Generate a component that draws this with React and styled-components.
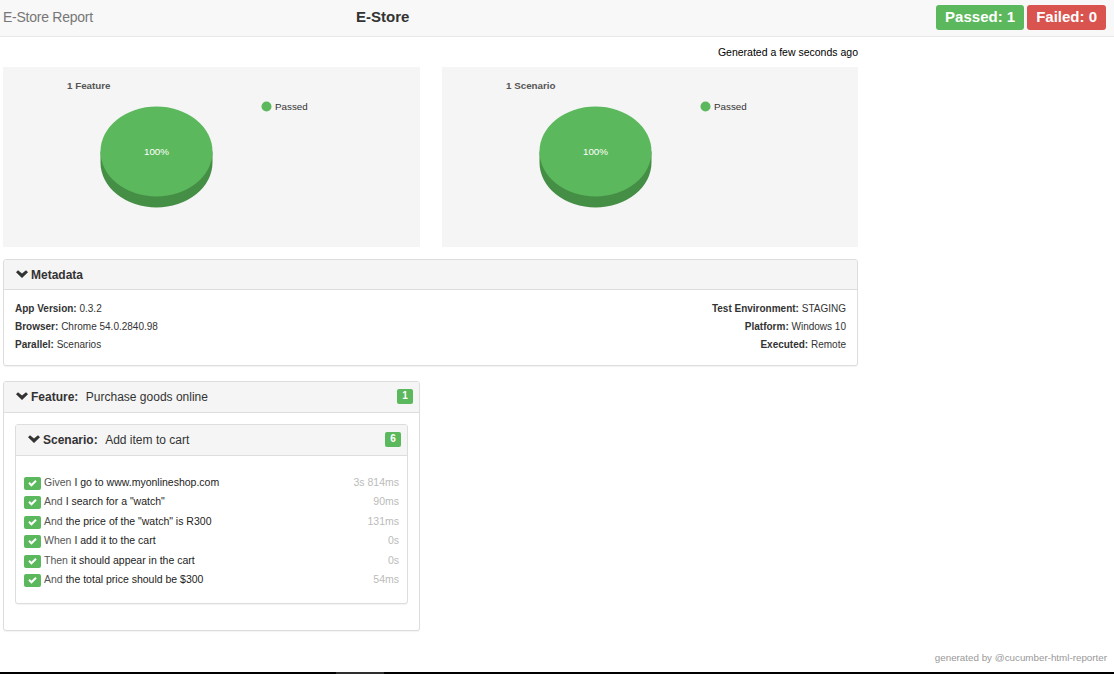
import React from 'react';
import styled, { createGlobalStyle } from 'styled-components';

const Global = createGlobalStyle`
  html, body { margin: 0; padding: 0; background: #fff; }
  body { font-family: "Liberation Sans", Arial, sans-serif; color: #333; }
  * { box-sizing: border-box; }
`;

const Page = styled.div`
  width: 1114px;
  height: 674px;
  display: flex;
  flex-direction: column;
  overflow: hidden;
`;
const Navbar = styled.header`
  height: 37px;
  flex: none;
  background: #f8f8f8;
  border-bottom: 1px solid #e7e7e7;
  display: flex;
  align-items: center;
  padding: 0 8px 2px 3px;
`;
const Brand = styled.div`
  width: 353px;
  font-size: 14px;
  letter-spacing: -0.25px;
  color: #777;
`;
const ProjectName = styled.div`
  font-size: 15px;
  font-weight: 700;
  color: #333;
  padding-bottom: 2px;
`;
const Badges = styled.div`
  margin-left: auto;
  display: flex;
  gap: 3px;
`;
const StatusBadge = styled.div`
  height: 25px;
  padding: 0 9px 2px;
  border-radius: 3px;
  background: ${p => p.$bg};
  color: #fff;
  font-size: 15px;
  font-weight: 700;
  display: flex;
  align-items: center;
`;
const Content = styled.main`
  width: 855px;
  margin-left: 3px;
  flex: 1;
  display: flex;
  flex-direction: column;
`;
const Generated = styled.div`
  height: 30px;
  font-size: 10.5px;
  color: #000;
  text-align: right;
  padding-top: 9px;
`;
const Charts = styled.section`
  display: grid;
  grid-template-columns: 417px 416px;
  column-gap: 22px;
  height: 180px;
`;
const ChartBox = styled.div`
  background: #f5f5f5;
  height: 180px;
  svg { display: block; }
`;
const Panel = styled.section`
  border: 1px solid #ddd;
  border-radius: 3px;
  background: #fff;
  box-shadow: 0 1px 1px rgba(0,0,0,.05);
  width: ${p => p.$width || '100%'};
  height: ${p => p.$height};
  margin: ${p => p.$margin || 0};
  overflow: hidden;
`;
const PanelHead = styled.div`
  height: ${p => p.$h || 30}px;
  background: #f5f5f5;
  border-bottom: 1px solid #ddd;
  padding: 0 6px 0 12px;
  display: flex;
  align-items: center;
  font-size: 12px;
  color: #333;
`;
const ChevronSvg = styled.svg`
  width: 12px;
  height: 8px;
  margin-right: 3px;
  flex: none;
  position: relative;
  top: -1px;
  fill: #333;
`;
const Chevron = () => (
  <ChevronSvg viewBox="0 0 12 8"><polygon points="0,2.2 2,0.2 6,3.6 10,0.2 12,2.2 6,8" /></ChevronSvg>
);
const HeadKey = styled.b`
  font-weight: 700;
  margin-right: 7.5px;
`;
const CountBadge = styled.span`
  margin-left: auto;
  width: 16px;
  height: 15px;
  border-radius: 2px;
  background: #5cb85c;
  color: #fff;
  font-size: 10px;
  font-weight: 700;
  padding-bottom: 2px;
  display: flex;
  align-items: center;
  justify-content: center;
  position: relative;
  top: -1px;
`;
const MetaBody = styled.div`
  display: flex;
  justify-content: space-between;
  padding: 10px 11px 0 11px;
`;
const MetaCol = styled.div`
  text-align: ${p => p.$right ? 'right' : 'left'};
`;
const MetaRow = styled.div`
  font-size: 10px;
  line-height: 18px;
  color: #333;
  b { font-weight: 700; }
`;
const FeatureBody = styled.div`
  padding: 11px;
`;
const Steps = styled.div`
  padding: 20px 8px 0 8px;
`;
const Step = styled.div`
  height: 19.4px;
  display: flex;
  align-items: flex-start;
  font-size: 10.5px;
  line-height: 13px;
  color: #222;
`;
const CheckBox = styled.span`
  width: 17px;
  height: 13px;
  margin: 1px 3px 0 0;
  border-radius: 2px;
  background: #5cb85c;
  display: flex;
  align-items: center;
  justify-content: center;
  flex: none;
  svg { width: 9px; height: 7px; fill: #fff; }
`;
const Check = () => (
  <CheckBox><svg viewBox="0 0 10 8"><polygon points="0.2,4 1.8,2.4 3.8,4.3 8.2,0 9.8,1.6 3.8,7.6" /></svg></CheckBox>
);
const Keyword = styled.span`
  color: #555;
  margin-right: 3px;
`;
const Duration = styled.span`
  margin-left: auto;
  color: #bbb;
`;
const Footer = styled.div`
  flex: none;
  height: 14px;
  font-size: 9.8px;
  color: #999;
  text-align: right;
  padding-right: 7px;
  position: relative;
  top: -6px;
`;
const BottomBar = styled.div`
  flex: none;
  height: 2px;
  background: #000;
  position: relative;
`;
const BarThumb = styled.div`
  position: absolute;
  left: 336px;
  top: 0;
  width: 48px;
  height: 2px;
  background: #2e2e2e;
`;

function Pie({ title, width, cx }) {
  return (
    <svg width={width} height="180" viewBox={`0 0 ${width} 180`}>
      <text x="64" y="21.5" fontSize="9.8" fontWeight="700" fill="#555" fontFamily="Liberation Sans">{title}</text>
      <path d={`M${cx - 56} 84.5 V95.5 A56 45 0 0 0 ${cx + 56} 95.5 V84.5 Z`} fill="#458e45" />
      <ellipse cx={cx} cy="84.5" rx="56" ry="45" fill="#5cb85c" />
      <text x={cx} y="88" fontSize="9.8" fill="#fff" textAnchor="middle" fontFamily="Liberation Sans">100%</text>
      <circle cx={cx + 110} cy="39.5" r="5" fill="#5cb85c" />
      <text x={cx + 118.5} y="43" fontSize="9.8" fill="#333" fontFamily="Liberation Sans">Passed</text>
    </svg>
  );
}

const steps = [
  ['Given', 'I go to www.myonlineshop.com', '3s 814ms'],
  ['And', 'I search for a "watch"', '90ms'],
  ['And', 'the price of the "watch" is R300', '131ms'],
  ['When', 'I add it to the cart', '0s'],
  ['Then', 'it should appear in the cart', '0s'],
  ['And', 'the total price should be $300', '54ms'],
];

export default function App() {
  return (
    <Page>
      <Global />
      <Navbar>
        <Brand>E-Store Report</Brand>
        <ProjectName>E-Store</ProjectName>
        <Badges>
          <StatusBadge $bg="#5cb85c">Passed: 1</StatusBadge>
          <StatusBadge $bg="#d9534f">Failed: 0</StatusBadge>
        </Badges>
      </Navbar>
      <Content>
        <Generated>Generated a few seconds ago</Generated>
        <Charts>
          <ChartBox><Pie title="1 Feature" width={417} cx={153.5} /></ChartBox>
          <ChartBox><Pie title="1 Scenario" width={416} cx={153.5} /></ChartBox>
        </Charts>
        <Panel $height="107px" $margin="12px 0 0 0">
          <PanelHead><Chevron /><HeadKey>Metadata</HeadKey></PanelHead>
          <MetaBody>
            <MetaCol>
              <MetaRow><b>App Version:</b> 0.3.2</MetaRow>
              <MetaRow><b>Browser:</b> Chrome 54.0.2840.98</MetaRow>
              <MetaRow><b>Parallel:</b> Scenarios</MetaRow>
            </MetaCol>
            <MetaCol $right>
              <MetaRow><b>Test Environment:</b> STAGING</MetaRow>
              <MetaRow><b>Platform:</b> Windows 10</MetaRow>
              <MetaRow><b>Executed:</b> Remote</MetaRow>
            </MetaCol>
          </MetaBody>
        </Panel>
        <Panel $width="417px" $height="250px" $margin="15px 0 0 0">
          <PanelHead $h={31}><Chevron /><HeadKey>Feature:</HeadKey> Purchase goods online<CountBadge>1</CountBadge></PanelHead>
          <FeatureBody>
            <Panel $height="180px">
              <PanelHead $h={31}><Chevron /><HeadKey>Scenario:</HeadKey> Add item to cart<CountBadge>6</CountBadge></PanelHead>
              <Steps>
                {steps.map(([k, t, d], i) => (
                  <Step key={i}>
                    <Check />
                    <Keyword>{k}</Keyword>{t}
                    <Duration>{d}</Duration>
                  </Step>
                ))}
              </Steps>
            </Panel>
          </FeatureBody>
        </Panel>
      </Content>
      <Footer>generated by @cucumber-html-reporter</Footer>
      <BottomBar><BarThumb /></BottomBar>
    </Page>
  );
}
